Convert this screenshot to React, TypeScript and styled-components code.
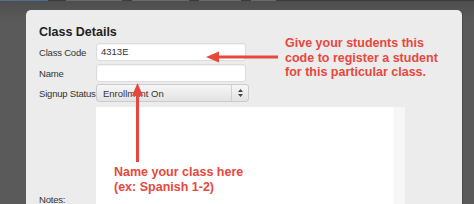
import React from "react";
import styled, { createGlobalStyle } from "styled-components";

const GlobalStyle = createGlobalStyle`
  html, body {
    margin: 0;
    padding: 0;
    background: #585858;
    font-family: "Liberation Sans", Arial, sans-serif;
  }
  #root {
    width: 474px;
    height: 204px;
    overflow: hidden;
    position: relative;
  }
`;

const RED = "#e8473c";

const Page = styled.div`
  display: flex;
  flex-direction: column;
  width: 474px;
  height: 204px;
  background: #535353;
`;

const TopBar = styled.div`
  display: flex;
  align-items: stretch;
  height: 3px;
  background: #3c3c3c;
`;

const Logo = styled.div`
  width: 48px;
  background: linear-gradient(90deg, #5a6f86, #3f6f9e);
  margin-right: 18px;
`;

const NavButton = styled.div<{ $w: number }>`
  width: ${(p) => p.$w}px;
  margin-right: 10px;
  background: #1e1e1e;
  border: 1px solid #6a6a6a;
  border-top: none;
  border-radius: 0 0 2px 2px;
`;

const Stripe = styled.div`
  height: 4px;
  background: #696969;
`;

const Backdrop = styled.div`
  flex: 1;
  display: flex;
  padding-top: 9px;
  padding-left: 26px;
  background: linear-gradient(180deg, #4e4e4e 0px, #5a5a5a 20px);
`;

const Panel = styled.div`
  width: 436px;
  background: #ececec;
  border-radius: 5px 5px 0 0;
  padding: 15px 0 0 13px;
  box-sizing: border-box;
  box-shadow: 1px 0 0 #4a4a4a;
`;

const Heading = styled.div`
  font-size: 12.5px;
  font-weight: bold;
  color: #222;
  line-height: 15px;
  height: 15px;
  margin-bottom: 3px;
`;

const Form = styled.div`
  display: grid;
  grid-template-columns: 57px auto;
  align-items: center;
  justify-items: start;
`;

const Label = styled.div<{ $gap: number }>`
  font-size: 9.5px;
  letter-spacing: -0.2px;
  color: #333;
  white-space: nowrap;
  margin-bottom: ${(p) => p.$gap}px;
`;

const Field = styled.div<{ $gap: number }>`
  margin-bottom: ${(p) => p.$gap}px;
`;

const TextInput = styled.div`
  width: 150px;
  height: 18px;
  box-sizing: border-box;
  background: #fff;
  border: 1px solid #dcdcdc;
  border-radius: 3px;
  box-shadow: inset 0 1px 1px rgba(0, 0, 0, 0.05);
  font-size: 9.5px;
  color: #333;
  line-height: 16px;
  padding-left: 4px;
`;

const Select = styled.div`
  width: 153px;
  height: 18px;
  box-sizing: border-box;
  display: flex;
  align-items: center;
  background: linear-gradient(180deg, #f6f6f6, #e3e3e3);
  border: 1px solid #cbcbcb;
  border-radius: 3px;
  font-size: 9.5px;
  color: #333;
`;

const SelectText = styled.span`
  flex: 1;
  padding-left: 6px;
`;

const SelectArrows = styled.span`
  width: 16px;
  height: 100%;
  display: flex;
  align-items: center;
  justify-content: center;
  border-left: 1px solid #d0d0d0;
`;

const NotesBox = styled.div`
  display: flex;
  height: 184px;
`;

const NotesArea = styled.div`
  width: 297px;
  background: #fff;
`;

const ScrollTrack = styled.div`
  width: 11px;
  background: #f6f6f6;
  border-left: 1px solid #fafafa;
`;

const Overlay = styled.svg`
  position: absolute;
  left: 0;
  top: 0;
  pointer-events: none;
`;

const Callout = styled.div<{ $x: number; $y: number }>`
  position: absolute;
  left: ${(p) => p.$x}px;
  top: ${(p) => p.$y}px;
  font-size: 12.5px;
  font-weight: bold;
  line-height: 14.5px;
  color: ${RED};
  white-space: nowrap;
`;

export default function App() {
  return (
    <>
      <GlobalStyle />
      <Page>
        <TopBar>
          <Logo />
          <NavButton $w={54} />
          <NavButton $w={55} />
          <NavButton $w={40} />
          <NavButton $w={23} />
        </TopBar>
        <Stripe />
        <Backdrop>
          <Panel>
            <Heading>Class Details</Heading>
            <Form>
              <Label $gap={3}>Class Code</Label>
              <Field $gap={3}>
                <TextInput>4313E</TextInput>
              </Field>
              <Label $gap={2}>Name</Label>
              <Field $gap={2}>
                <TextInput />
              </Field>
              <Label $gap={5}>Signup Status</Label>
              <Field $gap={5}>
                <Select>
                  <SelectText>Enrollment On</SelectText>
                  <SelectArrows>
                    <svg width="5" height="8" viewBox="0 0 5 8">
                      <path d="M2.5 0 L5 3 L0 3 Z M2.5 8 L5 5 L0 5 Z" fill="#444" />
                    </svg>
                  </SelectArrows>
                </Select>
              </Field>
              <Label $gap={0}>Notes:</Label>
              <NotesBox>
                <NotesArea />
                <ScrollTrack />
              </NotesBox>
            </Form>
          </Panel>
        </Backdrop>
      </Page>
      <Overlay width="474" height="204" viewBox="0 0 474 204">
        <line x1="278" y1="57" x2="216" y2="57" stroke={RED} strokeWidth="3" />
        <polygon points="206,57 219,51.5 219,62.5" fill={RED} />
        <line x1="137.5" y1="162" x2="137.5" y2="93" stroke={RED} strokeWidth="3" />
        <polygon points="137.5,83 132,96 143,96" fill={RED} />
      </Overlay>
      <Callout $x={285} $y={36}>
        Give your students this
        <br />
        code to register a student
        <br />
        for this particular class.
      </Callout>
      <Callout $x={114} $y={165}>
        Name your class here
        <br />
        (ex: Spanish 1-2)
      </Callout>
    </>
  );
}
